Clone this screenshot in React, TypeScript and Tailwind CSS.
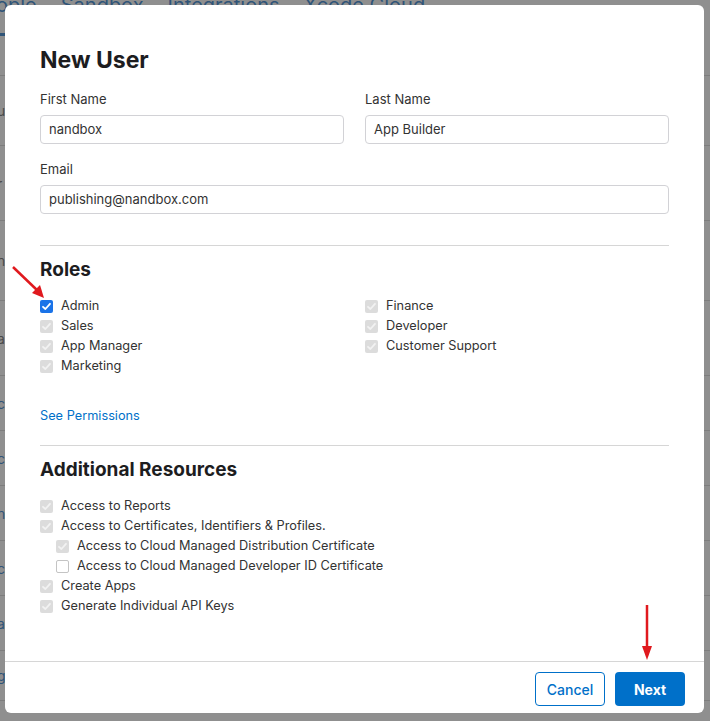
import React from "react";

const font = { fontFamily: "Inter, 'Liberation Sans', sans-serif" };

function Box({ state }: { state: "on" | "dis" | "off" }) {
  if (state === "off") {
    return <span className="inline-block w-[13px] h-[13px] rounded-[2px] border border-[#c4c4c4] bg-white shrink-0" />;
  }
  const bg = state === "on" ? "bg-[#1a73e8]" : "bg-[#dcdcdc]";
  const stroke = state === "on" ? "#ffffff" : "#f2f2f2";
  return (
    <span className={`inline-flex items-center justify-center w-[13px] h-[13px] rounded-[2px] shrink-0 ${bg}`}>
      <svg width="11" height="11" viewBox="0 0 11 11">
        <path d="M2 5.8 L4.4 8 L9 2.8" fill="none" stroke={stroke} strokeWidth="1.8" strokeLinecap="round" strokeLinejoin="round" />
      </svg>
    </span>
  );
}

function Row({ label, state, indent }: { label: string; state: "on" | "dis" | "off"; indent?: boolean }) {
  return (
    <div className={`flex items-center h-[20px] gap-[8px] ${indent ? "pl-[16px]" : ""}`}>
      <Box state={state} />
      <span className="text-[12.75px] text-[#333]">{label}</span>
    </div>
  );
}

export default function App() {
  const leftRows = [40, 70, 75, 80, 75, 55, 55, 55, 55, 55, 50];
  const chars = ["", "u", "r", "n", "a", "c", "c", "h", "c", "a", "g"];
  return (
    <div className="relative w-[710px] h-[721px] overflow-hidden bg-[#8f8f8f]" style={font}>
      {/* page behind overlay */}
      <div className="flex flex-col">
        <div className="flex gap-[24px] -mt-[10px] h-[46px] text-[20px] text-[#2f5478]">
          <span className="-ml-[4px] border-b-[3px] border-[#2f5478] h-[46px]">ople</span>
          <span>Sandbox</span>
          <span>Integrations</span>
          <span>Xcode Cloud</span>
        </div>
        {leftRows.map((h, i) => (
          <div key={i} className="flex items-center border-b border-[#7d7d7d] text-[14px]" style={{ height: h }}>
            <span className={`-ml-[3px] ${i >= 5 ? "text-[#2f5478]" : "text-[#4a4a4a]"}`}>{chars[i]}</span>
          </div>
        ))}
      </div>

      {/* modal */}
      <div className="absolute left-[5px] top-[5px] w-[699px] h-[708px] bg-white rounded-[6px] flex flex-col">
        <div className="flex-1 px-[35px] pt-[40px]">
          <h1 className="text-[23px] leading-[30px] font-bold text-[#1d1d1f]">New User</h1>
          <div className="grid grid-cols-2 gap-x-[21px] mt-[15px]">
            <div className="flex flex-col">
              <label className="text-[13px] leading-[18px] text-[#333]">First Name</label>
              <div className="mt-[7px] h-[29px] border border-[#d2d2d6] rounded-[4px] flex items-center px-[8px] text-[13px] text-[#333]">nandbox</div>
            </div>
            <div className="flex flex-col">
              <label className="text-[13px] leading-[18px] text-[#333]">Last Name</label>
              <div className="mt-[7px] h-[29px] border border-[#d2d2d6] rounded-[4px] flex items-center px-[8px] text-[13px] text-[#333]">App Builder</div>
            </div>
          </div>
          <label className="block mt-[16px] text-[13px] leading-[18px] text-[#333]">Email</label>
          <div className="mt-[7px] h-[29px] border border-[#d2d2d6] rounded-[4px] flex items-center px-[8px] text-[13px] text-[#333]">publishing@nandbox.com</div>

          <div className="mt-[31px] border-t border-[#d6d6d6]" />
          <h2 className="mt-[12px] text-[19px] leading-[24px] font-bold text-[#1d1d1f]">Roles</h2>
          <div className="grid grid-cols-2 gap-x-[21px] mt-[14px]">
            <div className="flex flex-col">
              <Row label="Admin" state="on" />
              <Row label="Sales" state="dis" />
              <Row label="App Manager" state="dis" />
              <Row label="Marketing" state="dis" />
            </div>
            <div className="flex flex-col">
              <Row label="Finance" state="dis" />
              <Row label="Developer" state="dis" />
              <Row label="Customer Support" state="dis" />
            </div>
          </div>
          <div className="mt-[30px] text-[12.75px] leading-[20px] text-[#0070c9]">See Permissions</div>

          <div className="mt-[19px] border-t border-[#d6d6d6]" />
          <h2 className="mt-[12px] text-[19px] leading-[24px] font-bold text-[#1d1d1f]">Additional Resources</h2>
          <div className="flex flex-col mt-[14px]">
            <Row label="Access to Reports" state="dis" />
            <Row label="Access to Certificates, Identifiers & Profiles." state="dis" />
            <Row label="Access to Cloud Managed Distribution Certificate" state="dis" indent />
            <Row label="Access to Cloud Managed Developer ID Certificate" state="off" indent />
            <Row label="Create Apps" state="dis" />
            <Row label="Generate Individual API Keys" state="dis" />
          </div>
        </div>
        <div className="h-[52px] border-t border-[#d6d6d6] flex items-start justify-end gap-[10px] pr-[19px] pt-[10px]">
          <button className="w-[70px] h-[34px] rounded-[4px] border border-[#0070c9] text-[#0070c9] text-[14px] font-medium bg-white">Cancel</button>
          <button className="w-[70px] h-[34px] rounded-[4px] bg-[#0070c9] text-white text-[14px] font-bold">Next</button>
        </div>
      </div>

      {/* red annotation arrows */}
      <svg className="absolute left-0 top-0 pointer-events-none" width="710" height="721">
        <line x1="13" y1="267" x2="38" y2="291" stroke="#e0191e" strokeWidth="2.5" />
        <polygon points="44,298 32,293 40,285" fill="#e0191e" />
        <line x1="647" y1="605" x2="647" y2="648" stroke="#e0191e" strokeWidth="2.5" />
        <polygon points="642,646 652,646 647,660" fill="#e0191e" />
      </svg>
    </div>
  );
}
